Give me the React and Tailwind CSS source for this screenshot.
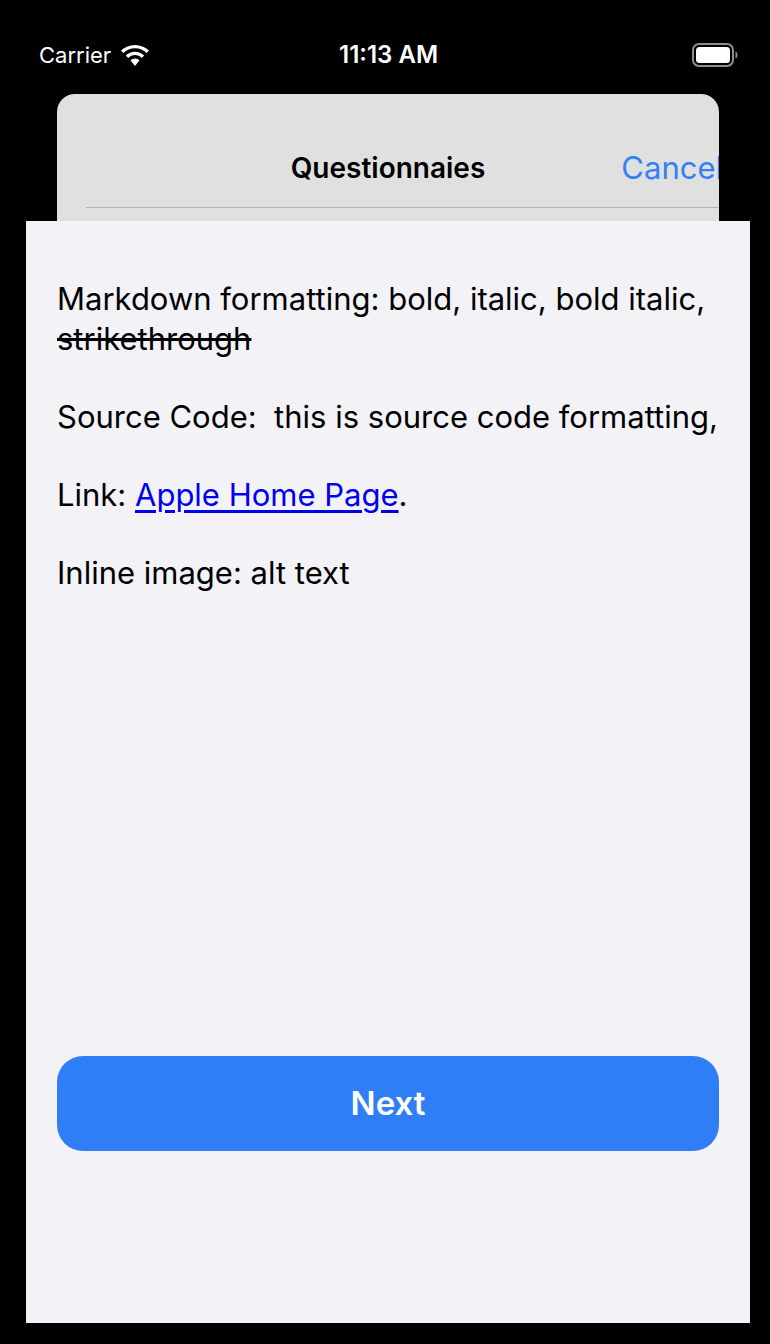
import React from 'react';

const font = { fontFamily: 'Inter, "Liberation Sans", Arial, sans-serif' };

function Wifi() {
  return (
    <svg width="28" height="21" viewBox="0 0 28 21" fill="white">
      <path d="M14 0C8.6 0 3.7 2.1 0 5.6l2.3 2.4C5.4 5 9.5 3.3 14 3.3s8.6 1.7 11.7 4.7L28 5.6C24.3 2.1 19.4 0 14 0z" />
      <path d="M14 6.8c-3.6 0-6.8 1.4-9.2 3.7l2.4 2.4c1.8-1.7 4.2-2.8 6.8-2.8s5 1.1 6.8 2.8l2.4-2.4C20.8 8.2 17.6 6.8 14 6.8z" />
      <path d="M14 13.6c-1.7 0-3.2.7-4.4 1.8L14 21l4.4-5.6c-1.2-1.1-2.7-1.8-4.4-1.8z" />
    </svg>
  );
}

function Battery() {
  return (
    <svg width="46" height="24" viewBox="0 0 46 24">
      <rect x="1" y="1" width="40" height="22" rx="6" fill="none" stroke="#8e8e8e" strokeWidth="2" />
      <rect x="4" y="4" width="34" height="16" rx="3.5" fill="white" />
      <path d="M43.5 8.5v7c1.3-.5 2-1.9 2-3.5s-.7-3-2-3.5z" fill="#8e8e8e" />
    </svg>
  );
}

export default function App() {
  return (
    <div className="w-[770px] h-[1344px] bg-black flex flex-col overflow-hidden" style={font}>
      {/* Status bar */}
      <div className="h-[94px] shrink-0 flex items-start pt-[40px] pl-[39px] pr-[32px] text-white">
        <div className="flex-1 flex items-center gap-[10px]">
          <span className="text-[22px] leading-[30px]">Carrier</span>
          <Wifi />
        </div>
        <span className="text-[24px] leading-[30px] font-semibold">11:13 AM</span>
        <div className="flex-1 flex justify-end pt-[3px]">
          <Battery />
        </div>
      </div>

      {/* Sheet behind */}
      <div className="ml-[57px] w-[662px] h-[127px] shrink-0 bg-[#e0e0e0] rounded-t-[18px] flex flex-col overflow-hidden">
        <div className="relative h-[113px] flex items-center justify-center pt-[34px]">
          <span className="text-[28px] font-semibold text-black">Questionnaies</span>
          <span className="absolute right-[-4px] top-[54px] text-[31px] text-[#3381f5] leading-[40px]">Cancel</span>
        </div>
        <div className="ml-[29px] h-px bg-[#b4b4b4]" />
      </div>

      {/* Main panel */}
      <div className="ml-[26px] w-[724px] h-[1102px] shrink-0 bg-[#f2f2f7] flex flex-col px-[31px] pt-[58px]">
        <div className="text-[31px] leading-[40px] text-black flex flex-col gap-[38px]">
          <p>
            Markdown formatting: bold, italic, bold italic,
            <br />
            <span className="line-through">strikethrough</span>
          </p>
          <p className="whitespace-nowrap">Source Code:&nbsp; this is source code formatting,</p>
          <p>
            Link: <span className="text-[#0000ee] underline underline-offset-[4px]">Apple Home Page</span>.
          </p>
          <p>Inline image: alt text</p>
        </div>
        <div className="flex-1" />
        <button className="h-[95px] rounded-[26px] bg-[#307ef5] text-white text-[33px] font-semibold">
          Next
        </button>
        <div className="h-[172px]" />
      </div>
    </div>
  );
}
